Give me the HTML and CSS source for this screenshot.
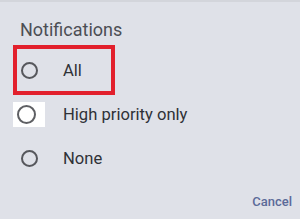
FILE: index.html
```html
<!DOCTYPE html>
<html>
<head>
<meta charset="utf-8">
<link rel="stylesheet" href="styles.css">
</head>
<body>
<div class="dialog">
  <div class="title">Notifications</div>
  <div class="options">
    <div class="option highlight">
      <span class="cell"><span class="radio"></span></span>
      <span class="label">All</span>
    </div>
    <div class="option">
      <span class="cell"><span class="white-box"><span class="radio big"></span></span></span>
      <span class="label">High priority only</span>
    </div>
    <div class="option">
      <span class="cell"><span class="radio"></span></span>
      <span class="label">None</span>
    </div>
  </div>
  <div class="actions"><span class="cancel">Cancel</span></div>
</div>
</body>
</html>
```
FILE: styles.css
```css
html, body {
  margin: 0;
  padding: 0;
}
body {
  width: 300px;
  height: 219px;
  background: #dfe1e8;
  font-family: Roboto, "Liberation Sans", sans-serif;
  overflow: hidden;
}
.dialog {
  border-top: 2px solid #d3d5db;
  height: 217px;
  display: flex;
  flex-direction: column;
}
.title {
  margin: 17px 0 0 20px;
  font-size: 18px;
  line-height: 22px;
  color: #4c4e54;
}
.options {
  margin-top: 7px;
  display: flex;
  flex-direction: column;
}
.option {
  display: flex;
  align-items: center;
  height: 44px;
  margin-left: 13px;
  box-sizing: border-box;
}
.option.highlight {
  width: 102px;
  height: 50px;
  margin-top: -3px;
  margin-bottom: -3px;
  border: 4px solid #e2202c;
}
.cell {
  width: 50px;
  display: flex;
  align-items: center;
  flex-shrink: 0;
}
.cell > .radio {
  margin-left: 8px;
}
.highlight .cell {
  width: 46px;
}
.highlight .cell > .radio {
  margin-left: 4px;
}
.white-box {
  width: 32px;
  height: 25px;
  background: #ffffff;
  display: flex;
  align-items: center;
}
.radio {
  width: 13px;
  height: 13px;
  border: 2px solid #56575c;
  border-radius: 50%;
  flex-shrink: 0;
}
.radio.big {
  width: 15px;
  height: 15px;
  margin-left: 4px;
  border-color: #5e5f63;
}
.label {
  font-size: 16.6px;
  color: #2f3137;
  white-space: nowrap;
}
.actions {
  margin-top: auto;
  display: flex;
  justify-content: flex-end;
  padding: 0 8px 10px 0;
}
.cancel {
  font-size: 13px;
  font-weight: 500;
  color: #5b6a99;
}
```
